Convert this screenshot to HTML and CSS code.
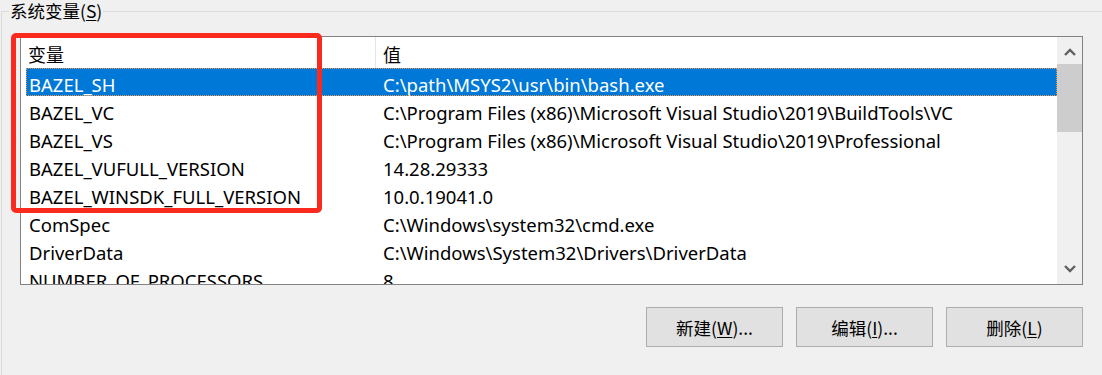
FILE: index.html
```html
<!DOCTYPE html>
<html lang="zh-CN">
<head>
<meta charset="utf-8">
<link rel="stylesheet" href="styles.css">
</head>
<body>
<div class="page">
  <fieldset class="group">
    <legend class="group-title">系统变量(<u>S</u>)</legend>
    <div class="listbox">
      <div class="list-main">
        <div class="list-header">
          <div class="hcell hcell-name">变量</div>
          <div class="hcell hcell-value">值</div>
        </div>
        <div class="rows">
          <div class="row selected"><span class="c1">BAZEL_SH</span><span class="c2">C:\path\MSYS2\usr\bin\bash.exe</span></div>
          <div class="row"><span class="c1">BAZEL_VC</span><span class="c2">C:\Program Files (x86)\Microsoft Visual Studio\2019\BuildTools\VC</span></div>
          <div class="row"><span class="c1">BAZEL_VS</span><span class="c2">C:\Program Files (x86)\Microsoft Visual Studio\2019\Professional</span></div>
          <div class="row"><span class="c1">BAZEL_VUFULL_VERSION</span><span class="c2">14.28.29333</span></div>
          <div class="row"><span class="c1">BAZEL_WINSDK_FULL_VERSION</span><span class="c2">10.0.19041.0</span></div>
          <div class="row"><span class="c1">ComSpec</span><span class="c2">C:\Windows\system32\cmd.exe</span></div>
          <div class="row"><span class="c1">DriverData</span><span class="c2">C:\Windows\System32\Drivers\DriverData</span></div>
          <div class="row"><span class="c1">NUMBER_OF_PROCESSORS</span><span class="c2">8</span></div>
        </div>
      </div>
      <div class="scrollbar">
        <div class="sb-btn sb-up">
          <svg width="12" height="8" viewBox="0 0 12 8"><path d="M1 7 L6 2 L11 7" fill="none" stroke="#606060" stroke-width="2.4"/></svg>
        </div>
        <div class="sb-track">
          <div class="sb-thumb"></div>
        </div>
        <div class="sb-btn sb-down">
          <svg width="12" height="8" viewBox="0 0 12 8"><path d="M1 1 L6 6 L11 1" fill="none" stroke="#606060" stroke-width="2.4"/></svg>
        </div>
      </div>
    </div>
    <div class="buttons">
      <button class="btn">新建(<u>W</u>)...</button>
      <button class="btn">编辑(<u>I</u>)...</button>
      <button class="btn">删除(<u>L</u>)</button>
    </div>
  </fieldset>
  <div class="highlight"></div>
</div>
</body>
</html>
```

FILE: styles.css
```css
html, body {
  margin: 0;
  padding: 0;
  background: #f0f0f0;
  overflow: hidden;
}
body {
  width: 1102px;
  height: 375px;
  font-family: "Noto Sans", "Noto Sans CJK SC", sans-serif;
  font-size: 18.5px;
  color: #000;
}
.page {
  position: relative;
  width: 1102px;
  height: 375px;
}
.group {
  margin: 0 0 0 1px;
  padding: 14px 0 0 18px;
  width: 1120px;
  height: 360px;
  box-sizing: content-box;
  border: 1px solid #dcdcdc;
  border-right: none;
}
.group-title {
  padding: 0 1px;
  margin-left: -11px;
  font-family: "Noto Sans CJK SC", sans-serif;
  font-size: 17.5px;
  line-height: 22px;
}
.group-title u, .btn u {
  text-underline-offset: 2px;
}
.listbox {
  width: 1061px;
  height: 247px;
  border: 1px solid #828282;
  background: #fff;
  display: flex;
  overflow: hidden;
}
.list-main {
  flex: 1;
  display: flex;
  flex-direction: column;
  overflow: hidden;
}
.list-header {
  display: flex;
  height: 31px;
  flex-shrink: 0;
}
.hcell {
  font-family: "Noto Sans CJK SC", sans-serif;
  font-size: 18px;
  line-height: 28px;
  padding-top: 3px;
  padding-left: 7px;
}
.hcell-name {
  width: 347px;
  border-right: 1px solid #e5e5e5;
}
.hcell-value {
  flex: 1;
}
.rows {
  padding-left: 5px;
}
.row {
  display: flex;
  height: 28px;
  padding-top: 5px;
  line-height: 23px;
  box-sizing: border-box;
  white-space: nowrap;
}
.c1 {
  width: 354px;
  padding-left: 3px;
  flex-shrink: 0;
}
.c2 {
  flex: 1;
}
.row.selected {
  background: #0078d7;
  color: #fff;
  outline: 1px dotted #e8964a;
  outline-offset: -1px;
}
.scrollbar {
  width: 25px;
  flex-shrink: 0;
  background: #f0f0f0;
  display: flex;
  flex-direction: column;
}
.sb-btn {
  height: 27px;
  display: flex;
  justify-content: center;
  flex-shrink: 0;
}
.sb-up {
  align-items: flex-end;
  padding-bottom: 8px;
  box-sizing: border-box;
}
.sb-down {
  align-items: flex-start;
  padding-top: 8px;
  box-sizing: border-box;
}
.sb-track {
  flex: 1;
}
.sb-thumb {
  height: 68px;
  background: #cdcdcd;
}
.buttons {
  width: 1063px;
  display: flex;
  justify-content: flex-end;
  gap: 13px;
  margin-top: 22px;
}
.btn {
  width: 137px;
  height: 40px;
  background: #e1e1e1;
  border: 1px solid #adadad;
  font-family: "Noto Sans CJK SC", sans-serif;
  font-size: 17.5px;
  color: #000;
  padding: 0;
}
.highlight {
  position: absolute;
  left: 11px;
  top: 33px;
  width: 311px;
  height: 180px;
  box-sizing: border-box;
  border: 5px solid #fb2a1f;
  border-radius: 5px;
}
```
